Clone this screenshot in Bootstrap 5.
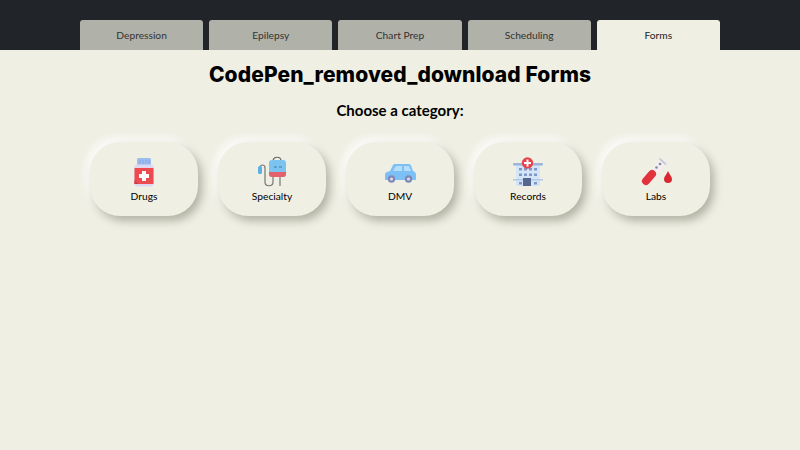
<!DOCTYPE html>
<html lang="en">
<head>
    <meta charset="UTF-8">
    <meta name="viewport" content="width=device-width, initial-scale=1.0">
    <title>Forms</title>
    <link href="https://cdn.jsdelivr.net/npm/bootstrap@5.3.0/dist/css/bootstrap.min.css" rel="stylesheet">
    <style>
        body {
            background-color: #efefe4;
            color: #000;
            font-family: Lato, "Liberation Sans", sans-serif;
            min-height: 100vh;
        }
        .top-strip {
            height: 50px;
            background-color: #212529;
            padding: 20px 80px 0;
            gap: 6px;
        }
        .tab-link {
            width: 123.2px;
            height: 30px;
            line-height: 30px;
            text-align: center;
            font-size: 10.24px;
            color: #333;
            background-color: #b0b1a9;
            border-radius: 3px 3px 0 0;
            text-decoration: none;
        }
        .tab-link.is-current {
            background-color: #efefe4;
            color: #222;
        }
        .page-title {
            font-family: Inter, "Liberation Sans", sans-serif;
            font-weight: 800;
            font-size: 21px;
            letter-spacing: .09px;
            line-height: 26px;
            margin: 12px 0 0;
        }
        .page-sub {
            font-weight: 700;
            font-size: 15px;
            line-height: 20px;
            margin: 12px 0 0;
        }
        .cat-row {
            padding: 22px 90px 0;
            gap: 20px;
        }
        .cat-tile {
            width: 108px;
            height: 74px;
            border-radius: 30px;
            background-color: #efefe4;
            box-shadow: 4px 5px 8px rgba(90, 90, 70, .4), -4px -4px 8px rgba(255, 255, 255, .85);
            font-size: 10.24px;
            color: #000;
            text-decoration: none;
            padding-top: 14px;
        }
        .cat-tile svg {
            width: 32px;
            height: 32px;
            display: block;
        }
        .cat-tile span {
            line-height: 14px;
            margin-top: 1px;
        }
    </style>
</head>
<body>
    <nav class="top-strip d-flex">
        <a class="tab-link" href="#">Depression</a>
        <a class="tab-link" href="#">Epilepsy</a>
        <a class="tab-link" href="#">Chart Prep</a>
        <a class="tab-link" href="#">Scheduling</a>
        <a class="tab-link is-current" href="#">Forms</a>
    </nav>

    <h1 class="page-title text-center">CodePen_removed_download Forms</h1>
    <h2 class="page-sub text-center">Choose a category:</h2>

    <div class="cat-row d-flex">
        <a class="cat-tile d-flex flex-column align-items-center" href="#">
            <svg viewBox="0 0 32 32">
                <rect x="9" y="2" width="14" height="8" rx="1.5" fill="#9dbdf0"/>
                <path d="M12 4v4M15 4v4M18 4v4M21 4v4" stroke="#7e9fdc" stroke-width=".8"/>
                <rect x="6.500" y="8.500" width="19" height="22" rx="3" fill="#dcd8f0"/>
                <rect x="6.500" y="12" width="19" height="16" fill="#ee4a50"/>
                <path d="M6.500 24l4 4h-4z" fill="#cf3a42"/>
                <path d="M14 15h4v3h3v4h-3v3h-4v-3h-3v-4h3z" fill="#fff"/>
            </svg>
            <span>Drugs</span>
        </a>
        <a class="cat-tile d-flex flex-column align-items-center" href="#">
            <svg viewBox="0 0 32 32">
                <path d="M17 5c0-5 8-5 8 0" fill="none" stroke="#666" stroke-width="1.2"/>
                <rect x="13" y="4" width="17" height="17" rx="3" fill="#7cc4ef"/>
                <path d="M13 16h17v2a3 3 0 0 1-3 3H16a3 3 0 0 1-3-3z" fill="#e4606a"/>
                <path d="M18 11h3M23 11h3" stroke="#3b7fb0" stroke-width="1.200"/>
                <path d="M24 21v9M17 21v5c0 5-8 5-8 0V12c0-4-5-4-5 0" fill="none" stroke="#777" stroke-width="1.200"/>
                <rect x="2" y="10" width="4" height="8" rx="1.500" fill="#5cb0e6"/>
            </svg>
            <span>Specialty</span>
        </a>
        <a class="cat-tile d-flex flex-column align-items-center" href="#">
            <svg viewBox="0 0 32 32">
                <path d="M1 24v-5c0-2 1-3 5-4l3-6c.5-1 1-1 2-1h14c1 0 1.500.5 2 1.500l2 5.500c2 .5 3 2 3 4v5z" fill="#7cc0f5"/>
                <path d="M9 15l3-5h6v5zM20 10h5l2 5h-7z" fill="#b5defa"/>
                <circle cx="7.500" cy="23" r="3.700" fill="#7f88b8"/><circle cx="7.500" cy="23" r="1.600" fill="#d8dcf0"/>
                <circle cx="24.500" cy="23" r="3.700" fill="#7f88b8"/><circle cx="24.500" cy="23" r="1.600" fill="#d8dcf0"/>
            </svg>
            <span>DMV</span>
        </a>
        <a class="cat-tile d-flex flex-column align-items-center" href="#">
            <svg viewBox="0 0 32 32">
                <rect x="4" y="7" width="24" height="23" fill="#d5e5f8"/>
                <rect x="1" y="7" width="30" height="2.500" rx="1" fill="#9db4dc"/>
                <rect x="1" y="23" width="30" height="1.500" fill="#b4c8e8"/>
                <path d="M7 12h3v2.500H7zM12 12h3v2.500h-3zM17 12h3v2.500h-3zM22 12h3v2.500h-3zM7 17.500h3V20H7zM12 17.500h3V20h-3zM17 17.500h3V20h-3zM22 17.500h3V20h-3zM7 26h3v2.500H7zM22 26h3v2.500h-3z" fill="#7f98c8"/>
                <rect x="11" y="22" width="8" height="8" fill="#56678f"/>
                <circle cx="15.500" cy="7" r="5.700" fill="#e8434d"/>
                <path d="M14.500 3.500h2V6H19v2h-2.500v2.500h-2V8H12V6h2.500z" fill="#fff"/>
            </svg>
            <span>Records</span>
        </a>
        <a class="cat-tile d-flex flex-column align-items-center" href="#">
            <svg viewBox="0 0 32 32">
                <path d="M6 25L22 7" stroke="#f6eeee" stroke-width="8" stroke-linecap="round"/>
                <path d="M6 25l6-7" stroke="#e2323c" stroke-width="8" stroke-linecap="round"/>
                <path d="M19.500 2.500l6.500 6" stroke="#c9cbd8" stroke-width="2"/>
                <circle cx="16.500" cy="11.500" r="1.300" fill="#7f8aa8"/><circle cx="20" cy="8" r="1.300" fill="#7f8aa8"/>
                <path d="M28 15c1.500 3.500 4 5.500 4 8a4 4 0 0 1-8 0c0-2.500 2.500-4.500 4-8z" fill="#d92630"/>
            </svg>
            <span>Labs</span>
        </a>
    </div>

    <script src="https://cdn.jsdelivr.net/npm/bootstrap@5.3.0/dist/js/bootstrap.bundle.min.js"></script>
</body>
</html>
